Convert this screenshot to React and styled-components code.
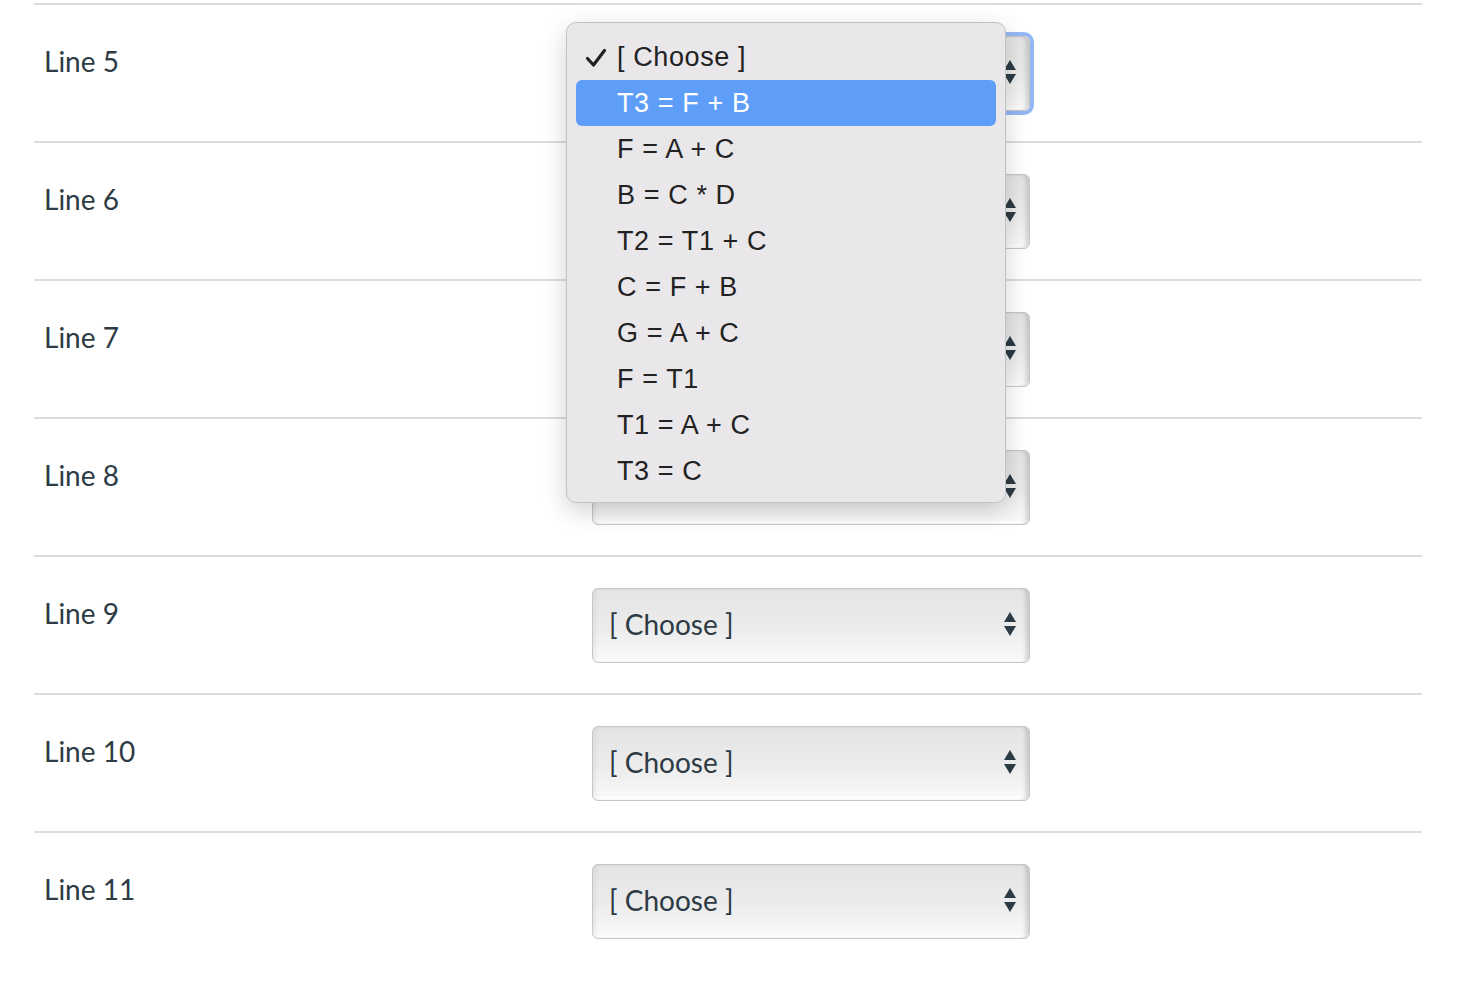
import React from 'react'
import styled, { createGlobalStyle } from 'styled-components'

const GlobalStyle = createGlobalStyle`
  html, body {
    margin: 0;
    padding: 0;
    background: #fff;
  }
  body {
    font-family: Lato, 'Liberation Sans', sans-serif;
    color: #2d3b45;
  }
`

const Page = styled.div`
  position: relative;
  width: 1457px;
  height: 1006px;
  overflow: hidden;
  padding: 3px 35px 0 34px;
  box-sizing: border-box;
`

const Row = styled.div`
  display: grid;
  grid-template-columns: 558px 438px;
  align-items: start;
  height: 138px;
  box-sizing: border-box;
  border-top: 2px solid #dcdcdc;
`

const Label = styled.div`
  padding: 39px 0 0 10px;
  font-size: 28px;
  line-height: 34px;
`

const SelectBox = styled.div`
  margin-top: 31px;
  height: 75px;
  box-sizing: border-box;
  display: flex;
  align-items: center;
  justify-content: space-between;
  padding: 0 12px 3px 16px;
  border: 1px solid #c6c6c6;
  border-radius: 6px;
  background: linear-gradient(#e4e4e4 0%, #ececec 55%, #fafafa 100%);
  box-shadow: inset -5px 0 4px -2px rgba(0, 0, 0, 0.16),
    inset 4px 0 4px -2px rgba(0, 0, 0, 0.07),
    inset 0 -3px 2px rgba(255, 255, 255, 0.95)
    ${p => (p.focused ? ', 0 0 0 4px #94b8f6' : '')};
  font-size: 28px;
  color: #2d3b45;
`

const Arrows = () => (
  <svg width="14" height="26" viewBox="0 0 14 26">
    <path d="M7 1 L13 11 L1 11 Z" fill="#2d3b45" />
    <path d="M1 15 L13 15 L7 25 Z" fill="#2d3b45" />
  </svg>
)

const Menu = styled.div`
  position: absolute;
  left: 566px;
  top: 22px;
  width: 440px;
  box-sizing: border-box;
  padding: 11px 0 8px;
  background: #e9e7ea;
  border: 1px solid #c3c1c4;
  border-radius: 10px;
  box-shadow: 0 8px 24px rgba(0, 0, 0, 0.18);
  font-family: 'Liberation Sans', Arial, sans-serif;
`

const Option = styled.div`
  position: relative;
  margin: 0 9px;
  height: 46px;
  display: flex;
  align-items: center;
  padding-left: 41px;
  border-radius: 6px;
  font-size: 27px;
  letter-spacing: 0.6px;
  color: ${p => (p.active ? '#fff' : '#222')};
  background: ${p => (p.active ? '#5f9ef8' : 'transparent')};
`

const Check = styled.svg`
  position: absolute;
  left: 9px;
  top: 13px;
`

const lines = [5, 6, 7, 8, 9, 10, 11]
const options = [
  '[ Choose ]',
  'T3 = F + B',
  'F = A + C',
  'B = C * D',
  'T2 = T1 + C',
  'C = F + B',
  'G = A + C',
  'F = T1',
  'T1 = A + C',
  'T3 = C',
]

export default function App() {
  return (
    <>
      <GlobalStyle />
      <Page>
        {lines.map((n, i) => (
          <Row key={n}>
            <Label>Line {n}</Label>
            <SelectBox focused={i === 0}>
              <span>[ Choose ]</span>
              <Arrows />
            </SelectBox>
          </Row>
        ))}

        <Menu>
          {options.map((opt, i) => (
            <Option key={opt} active={i === 1}>
              {i === 0 && (
                <Check width="22" height="22" viewBox="0 0 22 22">
                  <path
                    d="M2.5 11.5 L8.5 18 L19.5 3.5"
                    fill="none"
                    stroke="#222"
                    strokeWidth="3.2"
                    strokeLinecap="round"
                    strokeLinejoin="round"
                  />
                </Check>
              )}
              {opt}
            </Option>
          ))}
        </Menu>
      </Page>
    </>
  )
}
